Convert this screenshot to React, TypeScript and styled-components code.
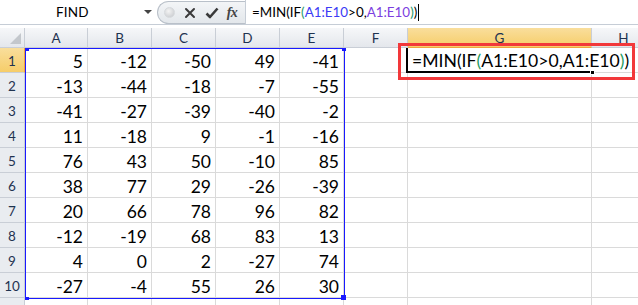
import React from 'react';
import styled, { createGlobalStyle, css } from 'styled-components';

const GlobalStyle = createGlobalStyle`
    html, body {
        margin: 0;
        padding: 0;
        background: #ffffff;
        overflow: hidden;
    }
    * {
        box-sizing: border-box;
    }
`;

const data: number[][] = [
    [5, -12, -50, 49, -41],
    [-13, -44, -18, -7, -55],
    [-41, -27, -39, -40, -2],
    [11, -18, 9, -1, -16],
    [76, 43, 50, -10, 85],
    [38, 77, 29, -26, -39],
    [20, 66, 78, 96, 82],
    [-12, -19, 68, 83, 13],
    [4, 0, 2, -27, 74],
    [-27, -4, 55, 26, 30],
];

const columns = ['A', 'B', 'C', 'D', 'E', 'F', 'G', 'H'];
const FONT = `Lato, 'Open Sans', 'Liberation Sans', sans-serif`;

const Page = styled.div`
    width: 638px;
    height: 305px;
    overflow: hidden;
    font-family: ${FONT};
    color: #000;
`;

const FormulaBar = styled.div`
    display: flex;
    height: 25px;
    border-bottom: 1px solid #c6cdd6;
    background: #ffffff;
`;

const NameBox = styled.div`
    width: 157px;
    display: flex;
    align-items: center;
    position: relative;
    font-size: 13.5px;
    padding-left: 56px;
    letter-spacing: 0.2px;
`;

const DropArrow = styled.span`
    position: absolute;
    right: 5px;
    top: 10px;
    width: 0;
    height: 0;
    border-left: 4px solid transparent;
    border-right: 4px solid transparent;
    border-top: 4px solid #444;
`;

const Controls = styled.div`
    width: 88px;
    display: flex;
    align-items: center;
    border: 1px solid #b9c0c9;
    border-right: none;
    border-radius: 12px 0 0 12px;
    margin: 1px 0 0;
    background: linear-gradient(#f3f5f7, #e3e7eb);
`;

const Grip = styled.span`
    width: 11px;
    height: 11px;
    margin-left: 6px;
    border-radius: 50%;
    background: radial-gradient(circle at 40% 35%, #f4f4f4, #c4c7cb);
    border: 1px solid #d6d9dc;
`;

const IconSlot = styled.span<{ $w: number }>`
    width: ${(p) => p.$w}px;
    display: flex;
    justify-content: center;
    align-items: center;
    color: #3b3b3b;
`;

const Fx = styled.span`
    font-family: 'Liberation Serif', 'DejaVu Serif', serif;
    font-style: italic;
    font-weight: bold;
    font-size: 14px;
    color: #444;
    letter-spacing: -0.5px;
`;

const FormulaInput = styled.div`
    flex: 1;
    display: flex;
    align-items: center;
    border-left: 1px solid #c6cdd6;
    padding-left: 6px;
    font-size: 13.4px;
    white-space: nowrap;
`;

const Caret = styled.span`
    display: inline-block;
    width: 1px;
    height: 17px;
    background: #000;
    margin-left: 1px;
`;

const Tok = styled.span<{ $c?: string }>`
    color: ${(p) => p.$c || 'inherit'};
`;

const GridWrap = styled.div`
    position: relative;
    margin-top: 3px;
`;

const Grid = styled.div`
    display: grid;
    grid-template-columns: 25px 63px 64px 64px 64px 64px 64px 184px 64px;
    grid-auto-rows: 25px;
    grid-template-rows: 20px;
`;

const headerBase = css`
    display: flex;
    align-items: center;
    justify-content: center;
    font-size: 13.5px;
    color: #1f3350;
    border-right: 1px solid #c9ced6;
    border-bottom: 1px solid #c9ced6;
`;

const ColHeader = styled.div<{ $active?: boolean }>`
    ${headerBase};
    padding-top: 1px;
    background: ${(p) =>
        p.$active ? 'linear-gradient(#f9de9c, #f6cd69)' : 'linear-gradient(#f6f7f9, #e4e7ec)'};
    border-bottom-color: ${(p) => (p.$active ? '#f0a33e' : '#c9ced6')};
`;

const Corner = styled.div`
    ${headerBase};
    position: relative;
    background: linear-gradient(#f6f7f9, #e4e7ec);
    &::after {
        content: '';
        position: absolute;
        right: 3px;
        bottom: 3px;
        border-left: 11px solid transparent;
        border-bottom: 11px solid #c3c7cc;
    }
`;

const RowHeader = styled.div<{ $active?: boolean }>`
    ${headerBase};
    padding-top: 2px;
    background: ${(p) => (p.$active ? 'linear-gradient(#f9de9c, #f6cd69)' : '#e9ecf0')};
    border-right-color: ${(p) => (p.$active ? '#f0a33e' : '#c9ced6')};
`;

const Cell = styled.div`
    display: flex;
    align-items: center;
    justify-content: flex-end;
    padding: 2px 4px 0 0;
    font-size: 17.5px;
    border-right: 1px solid #dadada;
    border-bottom: 1px solid #dadada;
`;

const EditCell = styled.div`
    position: relative;
    border-left: 2px solid #000;
    border-bottom: 2px solid #000;
    margin-left: -2px;
    z-index: 2;
`;

const EditText = styled.span`
    position: absolute;
    left: 2px;
    top: 0;
    height: 23px;
    padding: 2px 6px 0 2px;
    display: flex;
    align-items: center;
    background: #fff;
    white-space: nowrap;
    font-size: 17.6px;
`;

const FillHandle = styled.span`
    position: absolute;
    right: -3px;
    bottom: -4px;
    width: 5px;
    height: 5px;
    background: #000;
    border: 1px solid #fff;
`;

const RangeBox = styled.div`
    position: absolute;
    left: 25px;
    top: 20px;
    width: 320px;
    height: 251px;
    border: 1px solid #1a1aff;
    pointer-events: none;
    z-index: 3;
`;

const Handle = styled.span<{ $pos: 'tl' | 'tr' | 'bl' | 'br' }>`
    position: absolute;
    background: #1a1aff;
    width: ${(p) => (p.$pos === 'br' ? 5 : 4)}px;
    height: ${(p) => (p.$pos === 'br' ? 5 : 3)}px;
    ${(p) => (p.$pos[0] === 't' ? 'top: -1px;' : 'bottom: -2px;')}
    ${(p) => (p.$pos[1] === 'l' ? 'left: -1px;' : 'right: -2px;')}
`;

const Annotation = styled.div`
    position: absolute;
    left: 398px;
    top: 15px;
    width: 237px;
    height: 37px;
    border: 3px solid #f2383a;
    z-index: 4;
    pointer-events: none;
`;

const CrossIcon = () => (
    <svg width="12" height="12" viewBox="0 0 12 12">
        <path d="M2 2 L10 10 M10 2 L2 10" stroke="#3a3a3a" strokeWidth="2" strokeLinecap="round" />
    </svg>
);

const CheckIcon = () => (
    <svg width="14" height="12" viewBox="0 0 14 12">
        <path d="M1.5 6.5 L5 10 L12.5 1.5" stroke="#3a3a3a" strokeWidth="2.6" fill="none" strokeLinejoin="round" />
    </svg>
);

const Formula = ({ colored }: { colored: boolean }) => (
    <>
        =MIN(IF<Tok $c={colored ? '#1d9a6c' : '#1f9b60'}>(</Tok>
        <Tok $c={colored ? '#3b3bf5' : undefined}>A1:E10</Tok>&gt;0,
        <Tok $c={colored ? '#7b3fe0' : undefined}>A1:E10</Tok>
        <Tok $c={colored ? '#1d9a6c' : '#1f9b60'}>)</Tok>)
    </>
);

export default function App() {
    return (
        <Page>
            <GlobalStyle />
            <FormulaBar>
                <NameBox>
                    FIND
                    <DropArrow />
                </NameBox>
                <Controls>
                    <Grip />
                    <IconSlot $w={30}>
                        <CrossIcon />
                    </IconSlot>
                    <IconSlot $w={14}>
                        <CheckIcon />
                    </IconSlot>
                    <IconSlot $w={26}>
                        <Fx>fx</Fx>
                    </IconSlot>
                </Controls>
                <FormulaInput>
                    <Formula colored />
                    <Caret />
                </FormulaInput>
            </FormulaBar>
            <GridWrap>
                <Grid>
                    <Corner />
                    {columns.map((c) => (
                        <ColHeader key={c} $active={c === 'G'}>
                            {c}
                        </ColHeader>
                    ))}
                    {Array.from({ length: 11 }).map((_, r) => (
                        <React.Fragment key={r}>
                            {/* row 11 is only a sliver at the bottom edge, its number is out of view */}
                            <RowHeader $active={r === 0}>{r < 10 ? r + 1 : ''}</RowHeader>
                            {columns.map((c, ci) => {
                                if (r === 0 && c === 'G') {
                                    return (
                                        <EditCell key={c}>
                                            <EditText>
                                                <Formula colored={false} />
                                            </EditText>
                                            <FillHandle />
                                        </EditCell>
                                    );
                                }
                                const v = data[r] && ci < 5 ? data[r][ci] : undefined;
                                return <Cell key={c}>{v !== undefined ? v : ''}</Cell>;
                            })}
                        </React.Fragment>
                    ))}
                </Grid>
                <RangeBox>
                    <Handle $pos="tl" />
                    <Handle $pos="tr" />
                    <Handle $pos="bl" />
                    <Handle $pos="br" />
                </RangeBox>
                <Annotation />
            </GridWrap>
        </Page>
    );
}
